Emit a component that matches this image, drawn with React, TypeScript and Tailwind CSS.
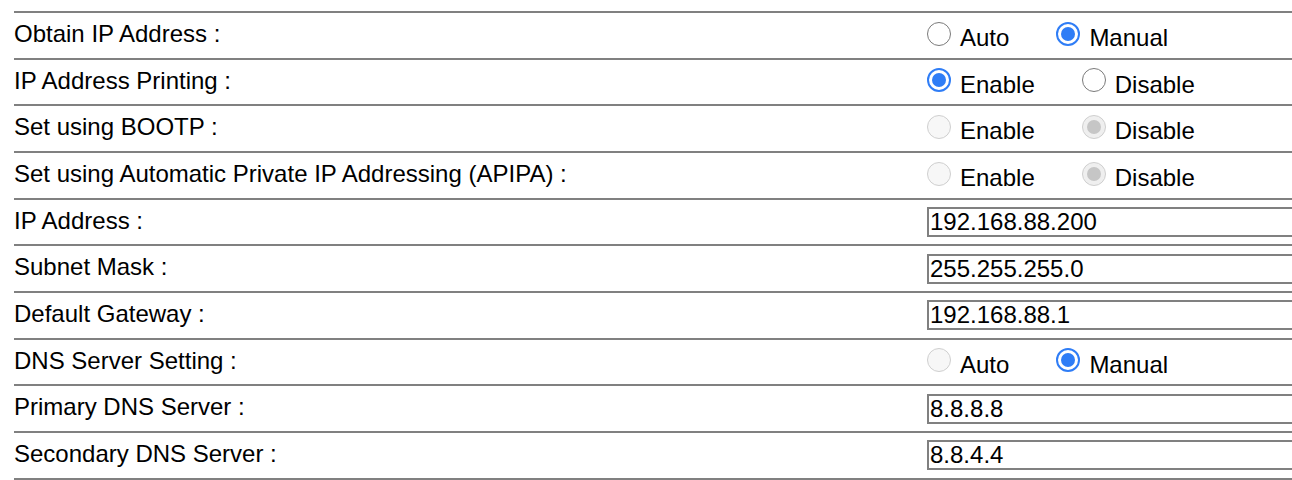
type RadioState = 'on' | 'off' | 'disabled-on' | 'disabled-off'

type Row =
  | { label: string; kind: 'radio'; options: { text: string; state: RadioState }[] }
  | { label: string; kind: 'input'; value: string }

const rows: Row[] = [
  {
    label: 'Obtain IP Address :',
    kind: 'radio',
    options: [
      { text: 'Auto', state: 'off' },
      { text: 'Manual', state: 'on' },
    ],
  },
  {
    label: 'IP Address Printing :',
    kind: 'radio',
    options: [
      { text: 'Enable', state: 'on' },
      { text: 'Disable', state: 'off' },
    ],
  },
  {
    label: 'Set using BOOTP :',
    kind: 'radio',
    options: [
      { text: 'Enable', state: 'disabled-off' },
      { text: 'Disable', state: 'disabled-on' },
    ],
  },
  {
    label: 'Set using Automatic Private IP Addressing (APIPA) :',
    kind: 'radio',
    options: [
      { text: 'Enable', state: 'disabled-off' },
      { text: 'Disable', state: 'disabled-on' },
    ],
  },
  { label: 'IP Address :', kind: 'input', value: '192.168.88.200' },
  { label: 'Subnet Mask :', kind: 'input', value: '255.255.255.0' },
  { label: 'Default Gateway :', kind: 'input', value: '192.168.88.1' },
  {
    label: 'DNS Server Setting :',
    kind: 'radio',
    options: [
      { text: 'Auto', state: 'disabled-off' },
      { text: 'Manual', state: 'on' },
    ],
  },
  { label: 'Primary DNS Server :', kind: 'input', value: '8.8.8.8' },
  { label: 'Secondary DNS Server :', kind: 'input', value: '8.8.4.4' },
]

function Radio({ state }: { state: RadioState }) {
  if (state === 'on') {
    return (
      <span className="mt-[-3.3px] flex h-[24px] w-[24px] shrink-0 items-center justify-center rounded-full border-2 border-[#2f7df6] bg-white">
        <span className="h-[14px] w-[14px] rounded-full bg-[#2f7df6]" />
      </span>
    )
  }
  if (state === 'disabled-on') {
    return (
      <span className="mt-[-3.3px] flex h-[24px] w-[24px] shrink-0 items-center justify-center rounded-full border border-[#cfcfcf] bg-[#efefef]">
        <span className="h-[14px] w-[14px] rounded-full bg-[#c6c6c6]" />
      </span>
    )
  }
  if (state === 'disabled-off') {
    return <span className="mt-[-3.3px] h-[24px] w-[24px] shrink-0 rounded-full border border-[#cfcfcf] bg-[#f7f7f7]" />
  }
  return <span className="mt-[-3.3px] h-[24px] w-[24px] shrink-0 rounded-full border-[1.5px] border-[#7a7a7a] bg-white" />
}

export default function App() {
  return (
    <div className="h-[480px] w-full overflow-hidden bg-white text-black" style={{ fontFamily: '"Liberation Sans", Arial, sans-serif' }}>
      <div className="ml-[14px] mt-[11px] w-[1400px] border-b-2 border-[#808080] text-[24px] leading-[26px]">
        {rows.map((row, i) => (
          <div key={i} className="box-border flex h-[46.67px] border-t-2 border-[#808080]">
            <div className="w-[913px] shrink-0 pt-[8px]">{row.label}</div>
            {row.kind === 'radio' ? (
              <div className="flex items-start pt-[12px]">
                {row.options.map((opt, j) => (
                  <div key={j} className={`flex items-start ${j > 0 ? 'ml-[47px]' : ''}`}>
                    <Radio state={opt.state} />
                    <span className="ml-[9px]">{opt.text}</span>
                  </div>
                ))}
              </div>
            ) : (
              <div className="pt-[7.3px]">
                <input
                  readOnly
                  value={row.value}
                  className="box-border h-[30px] w-[420px] border-2 border-[#808080] bg-white py-0 pl-[1px] text-[24px] leading-[26px] text-black outline-none"
                  style={{ fontFamily: '"Liberation Sans", Arial, sans-serif' }}
                />
              </div>
            )}
          </div>
        ))}
      </div>
    </div>
  )
}
